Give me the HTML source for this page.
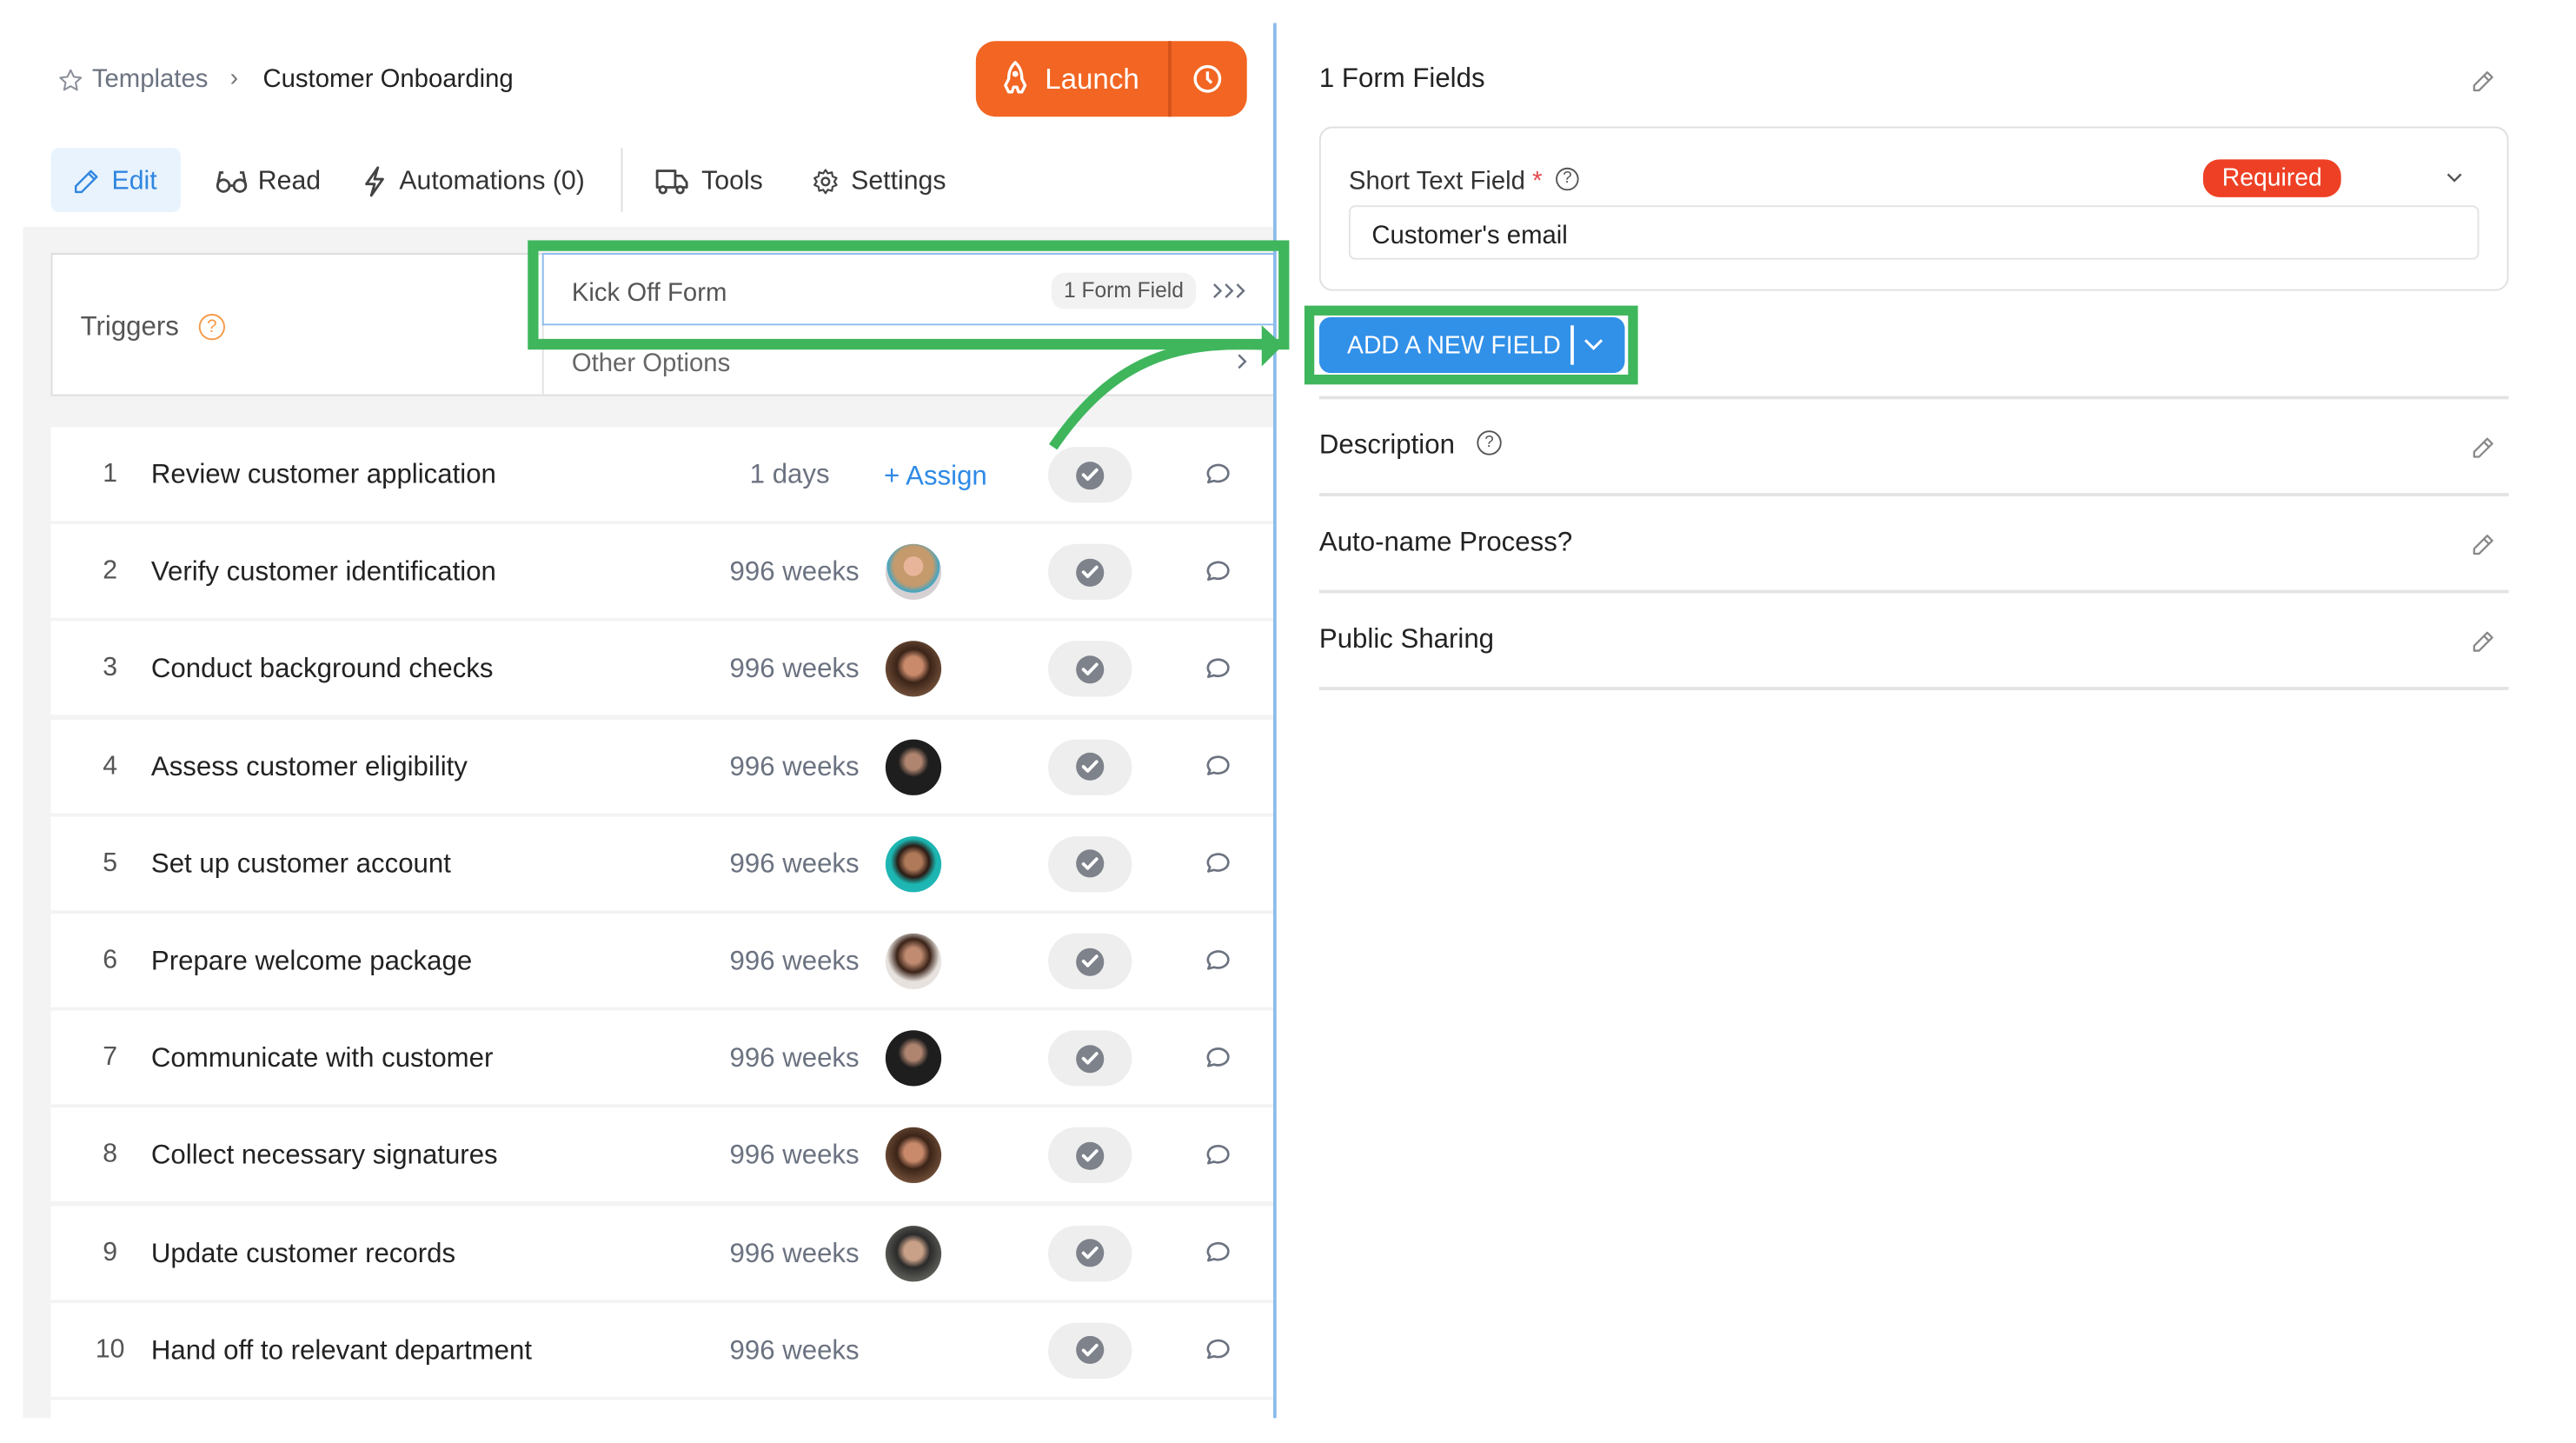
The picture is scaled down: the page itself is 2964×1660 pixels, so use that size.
<!DOCTYPE html>
<html><head><meta charset="utf-8"><style>
html,body{margin:0;padding:0;background:#fff;overflow:hidden}
body{width:2964px;height:1660px}
#s{position:absolute;left:0;top:0;width:1568px;height:878px;transform:scale(1.8903);transform-origin:0 0;font-family:"Liberation Sans",sans-serif;color:#222}
.a{position:absolute}
.t{position:absolute;white-space:nowrap}
.row{position:absolute;left:31px;width:744px;height:57px;background:#fff}
.num{position:absolute;left:0;width:72px;text-align:center;top:20px;font-size:16px;color:#555}
.ttl{position:absolute;left:61px;top:20px;font-size:16.5px;color:#222}
.dur{position:absolute;right:252px;top:20px;font-size:16.5px;color:#6b7280}
.av{position:absolute;left:508px;top:12px;width:34px;height:34px;border-radius:50%}
.pill{position:absolute;left:607px;top:12px;width:51px;height:34px;border-radius:17px;background:#eeeeee}
.ck{position:absolute;left:17px;top:8.5px;width:17px;height:17px;border-radius:50%;background:#7d828b}
.cm{position:absolute;left:700px;top:20px}
.hl{position:absolute;left:803px;width:724px;height:2px;background:#e3e3e3}
</style></head><body><div id="s">

<svg class="a" style="left:35px;top:41px" width="16" height="16" viewBox="0 0 24 24"><path d="M12 2.5l2.9 6.1 6.6.8-4.9 4.5 1.3 6.6L12 17.2 6.1 20.5l1.3-6.6L2.5 9.4l6.6-.8z" fill="none" stroke="#8a8f98" stroke-width="1.6" stroke-linejoin="round"/></svg>
<div class="t" style="left:56px;top:40px;font-size:15.5px;color:#6b7280">Templates</div>
<div class="t" style="left:140px;top:39px;font-size:15px;color:#777">›</div>
<div class="t" style="left:160px;top:40px;font-size:15.5px;color:#222">Customer Onboarding</div>

<div class="a" style="left:594px;top:25px;width:165px;height:46px;border-radius:12px;background:#f26522"></div>
<div class="a" style="left:711px;top:25px;width:2px;height:46px;background:#d4531a"></div>
<svg class="a" style="left:608px;top:36px" width="20" height="24" viewBox="0 0 20 24"><path d="M10 2c3 3 4 6 4 10l2 4-2 4h-2l-1-3H9l-1 3H6l-2-4 2-4c0-4 1-7 4-10z" fill="none" stroke="#fff" stroke-width="1.8" stroke-linejoin="round"/><circle cx="10" cy="9" r="1.8" fill="#fff"/></svg>
<div class="t" style="left:636px;top:38px;font-size:17.5px;color:#fff">Launch</div>
<svg class="a" style="left:725px;top:38px" width="20" height="20" viewBox="0 0 20 20"><circle cx="10" cy="10" r="7.5" fill="none" stroke="#fff" stroke-width="1.8"/><path d="M10 5.5V10l2.5 2.5" fill="none" stroke="#fff" stroke-width="1.8"/></svg>

<div class="a" style="left:31px;top:90px;width:79px;height:39px;border-radius:5px;background:#e8f3fd"></div>
<svg class="a" style="left:44px;top:102px" width="17" height="17" viewBox="0 0 24 24"><path d="M16 3l5 5L8 21H3v-5z M14 5l5 5" fill="none" stroke="#2f86e0" stroke-width="1.8" stroke-linejoin="round"/></svg>
<div class="t" style="left:68px;top:102px;font-size:16px;color:#2f86e0">Edit</div>
<svg class="a" style="left:131px;top:103px" width="20" height="16" viewBox="0 0 20 16"><circle cx="5" cy="10" r="3.6" fill="none" stroke="#444" stroke-width="1.5"/><circle cx="15" cy="10" r="3.6" fill="none" stroke="#444" stroke-width="1.5"/><path d="M8.5 10h3M1.4 10L3 2h2M18.6 10L17 2h-2" fill="none" stroke="#444" stroke-width="1.5"/></svg>
<div class="t" style="left:157px;top:102px;font-size:16px;color:#333">Read</div>
<svg class="a" style="left:221px;top:101px" width="14" height="19" viewBox="0 0 14 19"><path d="M9 1L2 11h5l-2 7 7-10H7z" fill="none" stroke="#444" stroke-width="1.5" stroke-linejoin="round"/></svg>
<div class="t" style="left:243px;top:102px;font-size:16px;color:#333">Automations (0)</div>
<div class="a" style="left:378px;top:90px;width:1px;height:39px;background:#ddd"></div>
<svg class="a" style="left:399px;top:102px" width="20" height="17" viewBox="0 0 20 17"><path d="M1 2h11v10H1zM12 5h4l3 4v3h-7" fill="none" stroke="#444" stroke-width="1.5" stroke-linejoin="round"/><circle cx="4.5" cy="13.5" r="2" fill="#fff" stroke="#444" stroke-width="1.5"/><circle cx="15" cy="13.5" r="2" fill="#fff" stroke="#444" stroke-width="1.5"/></svg>
<div class="t" style="left:427px;top:102px;font-size:16px;color:#333">Tools</div>
<svg class="a" style="left:494px;top:102px" width="17" height="17" viewBox="0 0 24 24"><circle cx="12" cy="12" r="3.2" fill="none" stroke="#444" stroke-width="1.8"/><path d="M12 2l2 3 3.5-1 .5 3.5 3.5 1.5-2 3 2 3-3.5 1.5-.5 3.5-3.5-1-2 3-2-3-3.5 1-.5-3.5L2.5 15l2-3-2-3L6 7.5 6.5 4 10 5z" fill="none" stroke="#444" stroke-width="1.6" stroke-linejoin="round"/></svg>
<div class="t" style="left:518px;top:102px;font-size:16px;color:#333">Settings</div>

<div class="a" style="left:14px;top:138px;width:761px;height:725px;background:#f3f3f3"></div>
<div class="a" style="left:775px;top:14px;width:1.5px;height:849px;background:#8cbcec"></div>

<div class="a" style="left:31px;top:154px;width:744px;height:87px;background:#fff;border:1px solid #ddd;box-sizing:border-box;border-right:none"></div>
<div class="a" style="left:330px;top:154px;width:1px;height:87px;background:#e2e2e2"></div>
<div class="t" style="left:49px;top:190px;font-size:16.5px;color:#555">Triggers</div>
<div class="a" style="left:121px;top:191px;width:14px;height:14px;border:1.6px solid #f59a48;border-radius:50%;color:#f59a48;font-size:11px;text-align:center;line-height:14px">?</div>
<div class="a" style="left:330px;top:154px;width:445px;height:44px;border:1.5px solid #8cbcec;box-sizing:border-box;border-right:none"></div>
<div class="t" style="left:348px;top:170px;font-size:15.5px;color:#555">Kick Off Form</div>
<div class="a" style="left:640px;top:166px;width:88px;height:22px;border-radius:8px;background:#f2f2f2;font-size:13px;color:#555;text-align:center;line-height:22px">1 Form Field</div>
<svg class="a" style="left:738px;top:171px" width="21" height="12" viewBox="0 0 21 12"><path d="M1 2l4 4-4 4M8 2l4 4-4 4M15 2l4 4-4 4" fill="none" stroke="#6b7280" stroke-width="1.3"/></svg>
<div class="t" style="left:348px;top:213px;font-size:15.5px;color:#666">Other Options</div>
<svg class="a" style="left:752px;top:214px" width="8" height="12" viewBox="0 0 8 12"><path d="M2 2l4 4-4 4" fill="none" stroke="#6b7280" stroke-width="1.3"/></svg>

<div class="row" style="top:260px"><div class="num">1</div><div class="ttl">Review customer application</div><div class="dur" style="right:270px">1 days</div><div class="t" style="left:507px;top:21px;font-size:16.5px;color:#2f8ae6">+ Assign</div><div class="pill"><div class="ck"></div></div></div>
<div class="row" style="top:319.2px"><div class="num">2</div><div class="ttl">Verify customer identification</div><div class="dur">996 weeks</div><div class="av" style="background:radial-gradient(circle at 50% 40%,#e8b59a 0 22%,#c59a6c 23% 45%,#3aa6c9 60%,#d6d0d3 61%)"></div><div class="pill"><div class="ck"></div></div></div>
<div class="row" style="top:378.4px"><div class="num">3</div><div class="ttl">Conduct background checks</div><div class="dur">996 weeks</div><div class="av" style="background:radial-gradient(circle at 50% 45%,#c98a6b 0 22%,#3b2418 40%,#6b4a35 70%,#9a8c75)"></div><div class="pill"><div class="ck"></div></div></div>
<div class="row" style="top:437.6px"><div class="num">4</div><div class="ttl">Assess customer eligibility</div><div class="dur">996 weeks</div><div class="av" style="background:radial-gradient(circle at 50% 40%,#b08570 0 18%,#1e1e1e 35%)"></div><div class="pill"><div class="ck"></div></div></div>
<div class="row" style="top:496.8px"><div class="num">5</div><div class="ttl">Set up customer account</div><div class="dur">996 weeks</div><div class="av" style="background:radial-gradient(circle at 50% 45%,#b07a5a 0 20%,#2a1a14 38%,#1bb5b0 55%,#2ab8c0)"></div><div class="pill"><div class="ck"></div></div></div>
<div class="row" style="top:556px"><div class="num">6</div><div class="ttl">Prepare welcome package</div><div class="dur">996 weeks</div><div class="av" style="background:radial-gradient(circle at 50% 40%,#c08b70 0 18%,#3a2218 38%,#e7e2dd 60%)"></div><div class="pill"><div class="ck"></div></div></div>
<div class="row" style="top:615.2px"><div class="num">7</div><div class="ttl">Communicate with customer</div><div class="dur">996 weeks</div><div class="av" style="background:radial-gradient(circle at 50% 40%,#b08570 0 18%,#1e1e1e 35%)"></div><div class="pill"><div class="ck"></div></div></div>
<div class="row" style="top:674.4px"><div class="num">8</div><div class="ttl">Collect necessary signatures</div><div class="dur">996 weeks</div><div class="av" style="background:radial-gradient(circle at 50% 45%,#c98a6b 0 22%,#3b2418 40%,#6b4a35 70%,#9a8c75)"></div><div class="pill"><div class="ck"></div></div></div>
<div class="row" style="top:733.6px"><div class="num">9</div><div class="ttl">Update customer records</div><div class="dur">996 weeks</div><div class="av" style="background:radial-gradient(circle at 50% 45%,#c9a088 0 22%,#2b2b2b 40%,#5a5a55 70%)"></div><div class="pill"><div class="ck"></div></div></div>
<div class="row" style="top:792.8px"><div class="num">10</div><div class="ttl">Hand off to relevant department</div><div class="dur">996 weeks</div><div class="pill"><div class="ck"></div></div></div>
<div class="row" style="top:852px;height:11px"></div>

<svg class="a" style="left:0;top:0" width="1568" height="878">
<defs><g id="ck"><path d="M-4 0.5l2.6 2.6L4-2.5" fill="none" stroke="#fff" stroke-width="2" stroke-linecap="round" stroke-linejoin="round"/></g>
<g id="cm"><path d="M-5.5 5.5l1-2.5a6.2 5 0 1 1 2.5 1.6z" fill="none" stroke="#6b7280" stroke-width="1.4" stroke-linejoin="round"/></g></defs>
<use href="#ck" x="663.5" y="288.5"/><use href="#cm" x="741" y="288"/>
<use href="#ck" x="663.5" y="347.7"/><use href="#cm" x="741" y="347.2"/>
<use href="#ck" x="663.5" y="406.9"/><use href="#cm" x="741" y="406.4"/>
<use href="#ck" x="663.5" y="466.1"/><use href="#cm" x="741" y="465.6"/>
<use href="#ck" x="663.5" y="525.3"/><use href="#cm" x="741" y="524.8"/>
<use href="#ck" x="663.5" y="584.5"/><use href="#cm" x="741" y="584"/>
<use href="#ck" x="663.5" y="643.7"/><use href="#cm" x="741" y="643.2"/>
<use href="#ck" x="663.5" y="702.9"/><use href="#cm" x="741" y="702.4"/>
<use href="#ck" x="663.5" y="762.1"/><use href="#cm" x="741" y="761.6"/>
<use href="#ck" x="663.5" y="821.3"/><use href="#cm" x="741" y="820.8"/>

<rect x="324.5" y="149.5" width="457" height="60" fill="none" stroke="#3fb65c" stroke-width="6.5"/>
<path d="M641 272 C 680 215, 720 208, 770 210" fill="none" stroke="#3fb65c" stroke-width="6"/>
<path d="M768 198 L781 210 L768 223 z" fill="#3fb65c"/>
<rect x="797" y="189" width="197" height="42" fill="none" stroke="#3fb65c" stroke-width="6"/>
</svg>

<div class="t" style="left:803px;top:39px;font-size:16.5px;color:#222">1 Form Fields</div>
<div class="a" style="left:803px;top:77px;width:724px;height:100px;border:1.5px solid #e0e0e0;border-radius:8px;box-sizing:border-box"></div>
<div class="t" style="left:821px;top:102px;font-size:15.5px;color:#333">Short Text Field <span style="color:#e5484d">*</span></div>
<div class="a" style="left:947px;top:102px;width:12px;height:12px;border:1.4px solid #555;border-radius:50%;font-size:10px;text-align:center;line-height:12px;color:#555">?</div>
<div class="a" style="left:1341px;top:97px;width:84px;height:23px;border-radius:10px;background:#ee4024;color:#fff;font-size:15px;text-align:center;line-height:23px">Required</div>
<svg class="a" style="left:1489px;top:104px" width="10" height="8" viewBox="0 0 10 8"><path d="M1 2l4 4 4-4" fill="none" stroke="#555" stroke-width="1.3"/></svg>
<div class="a" style="left:821px;top:125px;width:688px;height:33px;border:1.5px solid #e3e3e3;border-radius:4px;box-sizing:border-box"></div>
<div class="t" style="left:835px;top:135px;font-size:15.5px;color:#222">Customer's email</div>
<div class="a" style="left:803px;top:193px;width:186px;height:34px;border-radius:7px;background:#3190e8"></div>
<div class="t" style="left:820px;top:202px;font-size:15px;color:#fff">ADD A NEW FIELD</div>
<div class="a" style="left:956px;top:198px;width:1.5px;height:24px;background:#fff"></div>
<svg class="a" style="left:963px;top:205px" width="14" height="10" viewBox="0 0 14 10"><path d="M2 2l5 5 5-5" fill="none" stroke="#fff" stroke-width="1.6"/></svg>
<div class="hl" style="top:241px"></div>
<div class="hl" style="top:300px"></div>
<div class="hl" style="top:359px"></div>
<div class="hl" style="top:418px"></div>
<div class="t" style="left:803px;top:262px;font-size:16.5px;color:#222">Description</div>
<div class="a" style="left:899px;top:262px;width:13px;height:13px;border:1.4px solid #555;border-radius:50%;font-size:10px;text-align:center;line-height:13px;color:#555">?</div>
<div class="t" style="left:803px;top:321px;font-size:16.5px;color:#222">Auto-name Process?</div>
<div class="t" style="left:803px;top:380px;font-size:16.5px;color:#222">Public Sharing</div>
<svg class="a" style="left:0;top:0" width="1568" height="878">
<defs><g id="pen"><path d="M4 -6l3 3-8 8h-3v-3z M2 -4l3 3" fill="none" stroke="#888" stroke-width="1.2" stroke-linejoin="round"/></g></defs>
<use href="#pen" x="1510" y="50"/><use href="#pen" x="1510" y="273"/><use href="#pen" x="1510" y="332"/><use href="#pen" x="1510" y="391"/>
</svg>
</div></body></html>
